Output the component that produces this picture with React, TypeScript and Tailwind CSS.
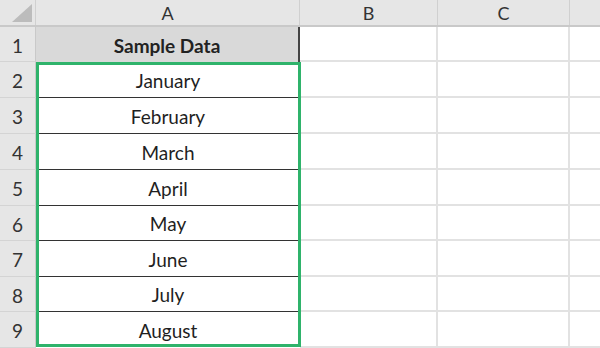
const months = ["January", "February", "March", "April", "May", "June", "July", "August"];
const rowHeights = [36, 36, 36, 36, 35, 36, 35, 36];

const font = { fontFamily: "Lato, 'Open Sans', 'Liberation Sans', sans-serif" };

function HeaderRow() {
  return (
    <div className="flex h-[27px] bg-[#e6e6e6] border-b-2 border-[#c9c9c9]">
      <div className="relative w-[36px] shrink-0 border-r border-[#d0d0d0]">
        <svg className="absolute right-[3px] bottom-[3px]" width="20" height="18" viewBox="0 0 20 18">
          <polygon points="20,0 20,18 0,18" fill="#bcbcbc" />
        </svg>
      </div>
      <div className="w-[264px] shrink-0 flex items-center justify-center pt-[2px] border-r border-[#d0d0d0] text-[18px] text-[#333]">A</div>
      <div className="w-[138px] shrink-0 flex items-center justify-center pt-[2px] border-r border-[#d0d0d0] text-[18px] text-[#333]">B</div>
      <div className="w-[132px] shrink-0 flex items-center justify-center pt-[2px] border-r border-[#d0d0d0] text-[18px] text-[#333]">C</div>
      <div className="flex-1" />
    </div>
  );
}

function Row({ n, h, children, first, last }: { n: number; h: number; children: React.ReactNode; first?: boolean; last?: boolean }) {
  return (
    <div className="flex" style={{ height: h }}>
      <div className="w-[36px] shrink-0 flex items-center justify-center pt-[4px] bg-[#e6e6e6] border-r border-[#c9c9c9] border-b border-b-[#d4d4d4] text-[19px] text-[#333]">
        {n}
      </div>
      <div
        className={
          first
            ? "w-[264px] shrink-0 flex items-center justify-center pt-[3px] bg-[#d9d9d9] border-r-2 border-[#444] text-[19px] font-bold text-[#222]"
            : "w-[264px] shrink-0 flex items-center justify-center pt-[3px] bg-white text-[19px] text-[#1f1f1f] " +
              (last ? "" : "border-b border-[#333]")
        }
      >
        {children}
      </div>
      <div className="w-[138px] shrink-0 border-r-2 border-b-2 border-[#e2e2e2]" />
      <div className="w-[132px] shrink-0 border-r-2 border-b-2 border-[#e2e2e2]" />
      <div className="flex-1 border-b-2 border-[#e2e2e2]" />
    </div>
  );
}

export default function App() {
  return (
    <div className="w-[600px] h-[348px] overflow-hidden bg-white relative" style={font}>
      <HeaderRow />
      <Row n={1} h={35} first>
        Sample Data
      </Row>
      {months.map((m, i) => (
        <Row key={m} n={i + 2} h={rowHeights[i]} last={i === months.length - 1}>
          {m}
        </Row>
      ))}
      {/* selection outline over A2:A9 */}
      <div className="absolute left-[36px] top-[62px] w-[265px] h-[285px] border-[3px] border-[#2fb36b] pointer-events-none" />
    </div>
  );
}
